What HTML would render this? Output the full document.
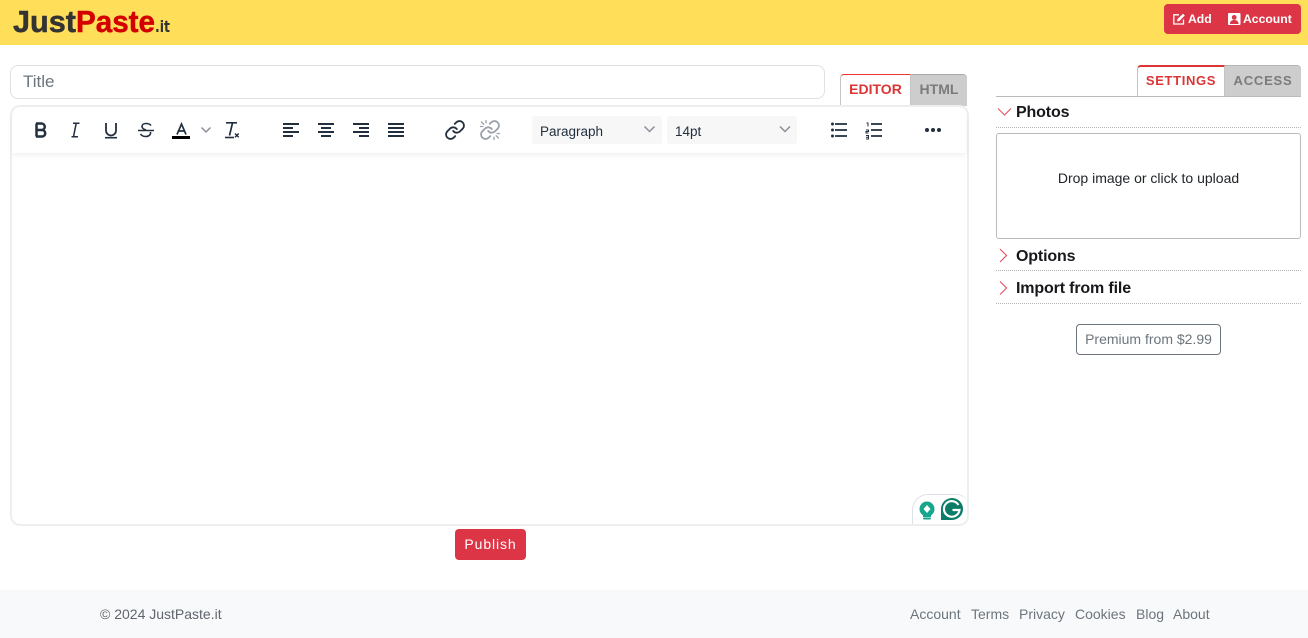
<!DOCTYPE html>
<html lang="en"><head><meta charset="utf-8"><title>JustPaste.it</title>
<style>
html,body{margin:0;padding:0;background:#fff}
body{position:relative;width:1308px;height:638px;overflow:hidden;font-family:"Liberation Sans",Arial,sans-serif;color:#212529}
.a{position:absolute;box-sizing:border-box;white-space:nowrap}
.head{left:0;top:0;width:1308px;height:45px;background:#ffde59}
.btn{left:1164px;top:4px;width:137px;height:30px;background:#dc3545;border-radius:4px}
.w{color:#fff;font-weight:700;font-size:12.2px;line-height:14px;top:12px}
.title{left:10px;top:65px;width:815px;height:34px;border:1px solid #dee2e6;border-radius:8px;padding:0 12px;font-size:17px;line-height:31px;color:#6c757d}
.ed{left:10px;top:105px;width:959px;height:421px;border:2px solid #eee;border-radius:10px;background:#fff}
.tb{left:12px;top:107px;width:954px;height:46px;background:#fff;border-radius:10px 10px 0 0;box-shadow:0 3px 6px -1px rgba(34,47,62,.08)}
.sel{top:116px;height:28px;width:130px;background:#f7f7f7;border-radius:3px;font-size:13.5px;line-height:31px;padding-left:8px;color:#222f3e}
.tab{font-weight:700;font-size:13px;text-align:center}
.sec{left:1016px;font-weight:700;font-size:16px;line-height:20px;color:#16181b;letter-spacing:-.15px}
.dot{left:996px;width:305px;height:0;border-top:1px dotted #b5b5b5}
.foot{left:0;top:590px;width:1308px;height:48px;background:#f8f9fa}
.fl{top:606px;font-size:14px;line-height:17px;color:#6c757d}
svg{position:absolute;overflow:visible}
</style></head><body>
<div class="a head"></div>
<svg style="left:0;top:0" width="200" height="45"><text y="32" font-family="Liberation Sans" font-weight="700" font-size="31" stroke-width=".5"><tspan x="13" fill="#333" stroke="#333" textLength="63" lengthAdjust="spacingAndGlyphs">Just</tspan><tspan x="76" fill="#d40000" stroke="#d40000" textLength="79" lengthAdjust="spacingAndGlyphs">Paste</tspan></text><text x="155" y="32" font-family="DejaVu Sans" font-weight="700" font-size="16" fill="#333" textLength="15" lengthAdjust="spacingAndGlyphs">.it</text></svg>

<div class="a btn"></div>
<svg style="left:1173px;top:13px" width="13" height="12" fill="none" stroke="#fff"><path d="M10.500 6.500V11H.8V1.800H6" stroke-width="1.300"/><path d="M4 8.500l.5-2.500L10 .7l1.800 1.800L6.400 8z" fill="#fff" stroke="none"/></svg>
<div class="a w" style="left:1188px">Add</div>
<svg style="left:1228px;top:13px" width="13" height="12"><rect width="12.500" height="12" rx="1" fill="#fff"/><circle cx="6.200" cy="4.400" r="2.400" fill="#dc3545"/><path d="M2 11c0-3 1.800-4 4.200-4s4.300 1 4.300 4z" fill="#dc3545"/></svg>
<div class="a w" style="left:1243px">Account</div>

<div class="a title">Title</div>

<div class="a tab" style="left:840px;top:74px;width:71px;height:32px;background:#fff;border:1px solid #c4c4c4;border-top:1px solid #e33;border-bottom:0;border-radius:4px 0 0 0;color:#dc3535;line-height:29px;font-size:14px">EDITOR</div>
<div class="a tab" style="left:911px;top:74px;width:56px;height:32px;background:#cdcdcd;border-top:1px solid #aaa;border-radius:0 4px 0 0;color:#7b7b7b;line-height:29px;font-size:14px">HTML</div>

<div class="a ed"></div>
<div class="a tb"></div>

<svg style="left:0;top:0" width="520" height="160" fill="none" stroke="#222f3e">
<!-- B -->
<path d="M36.500 123.500v13M36 123.500h5.500a3.200 3.200 0 0 1 0 6.500H36.500M36.500 130h6a3.300 3.300 0 0 1 0 6.500H36" stroke-width="2.500"/>
<!-- I -->
<path d="M73 123.300h6.500M71.500 136.700H78M76.200 123.300l-2.700 13.400" stroke-width="1.500"/>
<!-- U -->
<path d="M106 123v7.500a5 5 0 0 0 10 0V123" stroke-width="1.800"/><path d="M105 137.700h12" stroke-width="1.600"/>
<!-- S -->
<path d="M151 125.500c-1-1.500-3-2-5-2-2.500 0-4 1.200-4 3 0 1.500 1 2.500 4 3.500M150.500 132c.5 2.500-1.500 4.500-4.500 4.500-2.500 0-4.500-.8-5.500-2.500" stroke-width="1.600"/><path d="M138 130.500h16" stroke-width="1.500"/>
<!-- A -->
<path d="M177 134.500l4.500-10.500 4.500 10.500M178.500 131h6" stroke-width="1.700"/>
<rect x="172" y="136" width="18" height="3" fill="#000" stroke="none"/>
<path d="M201.500 127.500l4.500 4.500 4.500-4.500" stroke="#8a9099" stroke-width="1.500"/>
<!-- clear format -->
<path d="M226 122.800h11M232.500 123l-3 12.500" stroke-width="1.700"/><path d="M225 137.500h9" stroke-width="1.600"/><path d="M235 133.500l3.700 3.700M238.700 133.500l-3.700 3.700" stroke-width="1.400"/>
<!-- aligns -->
<g stroke-width="2">
<path d="M283 124h16M283 128h10M283 132h16M283 136h10"/>
<path d="M318 124h16M321 128h10M318 132h16M321 136h10"/>
<path d="M353 124h16M359 128h10M353 132h16M359 136h10"/>
<path d="M388 124h16M388 128h16M388 132h16M388 136h16"/>
</g>
<!-- link -->
<g transform="translate(444.200 119.200) scale(.9)" stroke-width="2" stroke-linecap="round" stroke-linejoin="round">
<path d="M10 13a5 5 0 0 0 7.540.54l3-3a5 5 0 0 0-7.070-7.070l-1.720 1.710"/>
<path d="M14 11a5 5 0 0 0-7.540-.54l-3 3a5 5 0 0 0 7.070 7.070l1.710-1.710"/>
</g>
<g transform="translate(479.200 119.200) scale(.9)" stroke="#9aa1a9" stroke-width="2" stroke-linecap="round" stroke-linejoin="round">
<path d="M10 13a5 5 0 0 0 7.540.54l3-3a5 5 0 0 0-7.070-7.070l-1.720 1.710"/>
<path d="M14 11a5 5 0 0 0-7.540-.54l-3 3a5 5 0 0 0 7.070 7.070l1.710-1.710"/>
</g>
<path stroke="#9aa1a9" stroke-linecap="round" stroke-width="1.300" d="M481.500 122l2.300 2.300M486 120.500v2.300M480.500 126.500h2.300M498.500 138l-2.300-2.300M494 139.500v-2.300M499.500 133.500h-2.300"/>
</svg>

<div class="a sel" style="left:532px">Paragraph</div>
<div class="a sel" style="left:667px">14pt</div>

<svg style="left:0;top:0" width="1000" height="160" fill="none" stroke="#222f3e">
<path d="M644.500 126.500l5 5 5-5M780 126.500l5 5 5-5" stroke="#8a9099" stroke-width="1.500"/>
<g stroke-width="1.800"><path d="M835 124h12M835 130h12M835 136h12"/><path d="M871 124h11M871 130h11M871 136h11"/></g>
<g fill="#222f3e" stroke="none"><circle cx="832.500" cy="124" r="1.500"/><circle cx="832.500" cy="130" r="1.500"/><circle cx="832.500" cy="136" r="1.500"/><circle cx="927" cy="130" r="2"/><circle cx="933" cy="130" r="2"/><circle cx="939" cy="130" r="2"/></g>
<g stroke-width="1"><path d="M866.500 123h1.500v3.500M866 130h2.500v1.500H866V133h2.500M866 135.500h2.500v3.500H866M866 137.200h2.500"/></g>
</svg>

<!-- grammarly -->
<div class="a" style="left:912px;top:494px;width:55px;height:30px;background:#fff;border:1px solid #dde1ea;border-right:0;border-bottom:0;border-radius:16px 10px 8px 0"></div>
<svg style="left:0;top:0" width="970" height="525">
<circle cx="927" cy="509" r="7.500" fill="#15a68c"/><path d="M923 514h8v3h-8z" fill="#15a68c"/><path d="M927 505l3.500 4-3.500 4-3.500-4z" fill="#fff"/><rect x="923" y="517.500" width="8" height="2" rx="1" fill="#15a68c"/>
<path d="M952 498a11 11 0 1 1 0 22H941V509A11 11 0 0 1 952 498z" fill="#0b7c67"/><path d="M958.500 505a7.800 7.800 0 1 0 1 5h-7" fill="none" stroke="#fff" stroke-width="2.200"/></svg>

<div class="a" style="left:455px;top:529px;width:71px;height:31px;background:#dc3545;border-radius:4px;color:#fff;font-size:14px;line-height:31px;text-align:center;letter-spacing:.9px">Publish</div>

<!-- right tabs -->
<div class="a tab" style="left:1137px;top:65px;width:88px;height:32px;background:#fff;border:1px solid #c4c4c4;border-top:2px solid #dc3535;border-bottom:0;border-radius:4px 0 0 0;color:#dc3535;line-height:28px;letter-spacing:.65px">SETTINGS</div>
<div class="a tab" style="left:1225px;top:65px;width:76px;height:31px;background:#cdcdcd;border-top:1px solid #b5b5b5;border-radius:0 4px 0 0;color:#7b7b7b;line-height:30px;letter-spacing:.8px">ACCESS</div>
<div class="a" style="left:996px;top:96px;width:305px;height:1px;background:#bbb"></div>

<svg style="left:0;top:0" width="1020" height="310" fill="none" stroke="#e4505f" stroke-width="1.100"><path d="M998 108.500l6.500 6.500 6.500-6.500M1000 249l6.500 6.500-6.500 6.500M1000 281.500l6.500 6.500-6.500 6.500"/></svg>
<div class="a sec" style="top:103px">Photos</div>
<div class="a dot" style="top:127px"></div>
<div class="a" style="left:996px;top:133px;width:305px;height:106px;border:1px solid #bbb;border-radius:3px;text-align:center;font-size:14px;line-height:89px;color:#212529">Drop image or click to upload</div>
<div class="a sec" style="top:247px">Options</div>
<div class="a dot" style="top:270px"></div>
<div class="a sec" style="top:279px">Import from file</div>
<div class="a dot" style="top:303px"></div>
<div class="a" style="left:1076px;top:324px;width:145px;height:31px;border:1px solid #6c757d;border-radius:4px;text-align:center;font-size:14px;line-height:28px;color:#6c757d">Premium from $2.99</div>

<div class="a foot"></div>
<div class="a fl" style="left:100px;color:#5f666d">© 2024 JustPaste.it</div>
<div class="a fl" style="left:910px">Account</div>
<div class="a fl" style="left:971px">Terms</div>
<div class="a fl" style="left:1019px">Privacy</div>
<div class="a fl" style="left:1075px">Cookies</div>
<div class="a fl" style="left:1136px">Blog</div>
<div class="a fl" style="left:1173px">About</div>
</body></html>
